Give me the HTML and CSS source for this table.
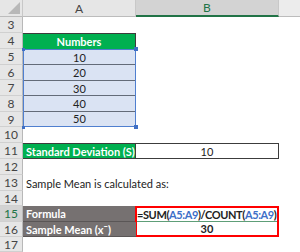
FILE: index.html
```html
<!DOCTYPE html>
<html>
<head>
<meta charset="utf-8">
<link rel="stylesheet" href="styles.css">
</head>
<body>
<div class="sheet">
  <div class="corner"><span class="tri"></span></div>
  <div class="ch">A</div>
  <div class="ch ch-sel">B</div>
  <div class="ch ch-rest"></div>

  <div class="rh">3</div><div class="c"></div><div class="c"></div><div class="c"></div>

  <div class="rh">4</div><div class="c green center bold bd-hdr">Numbers</div><div class="c"></div><div class="c"></div>

  <div class="rh">5</div>
  <div class="blk">
    <div class="bc">10</div>
    <div class="bc">20</div>
    <div class="bc">30</div>
    <div class="bc">40</div>
    <div class="bc last">50</div>
    <span class="h h-tl"></span><span class="h h-tr"></span><span class="h h-bl"></span><span class="h h-br"></span>
  </div>
  <div class="c"></div><div class="c"></div>
  <div class="rh">6</div><div class="c"></div><div class="c"></div>
  <div class="rh">7</div><div class="c"></div><div class="c"></div>
  <div class="rh">8</div><div class="c"></div><div class="c"></div>
  <div class="rh">9</div><div class="c"></div><div class="c"></div>

  <div class="rh">10</div><div class="c"></div><div class="c"></div><div class="c"></div>

  <div class="rh">11</div><div class="c green bold pad bd-green">Standard Deviation (S)</div><div class="c center bd-val">10</div><div class="c"></div>

  <div class="rh">12</div><div class="c"></div><div class="c"></div><div class="c"></div>

  <div class="rh">13</div><div class="c pad over">Sample Mean is calculated as:</div><div class="c"></div><div class="c"></div>

  <div class="rh">14</div><div class="c"></div><div class="c"></div><div class="c"></div>

  <div class="rh rh-sel">15</div><div class="c dark bold pad">Formula</div>
  <div class="redbox">
    <div class="rb formula">=SUM(<span class="ref">A5:A9</span>)/COUNT(<span class="ref">A5:A9</span>)<span class="caret"></span></div>
    <div class="rb center bold">30</div>
  </div>
  <div class="c"></div>
  <div class="rh">16</div><div class="c dark bold pad">Sample Mean (x&#175;)</div><div class="c"></div>

  <div class="rh">17</div><div class="c"></div><div class="c"></div><div class="c"></div>
</div>
</body>
</html>
```
FILE: styles.css
```css
html, body {
  margin: 0;
  padding: 0;
  background: #ffffff;
}
body {
  font-family: Lato, "Liberation Sans", sans-serif;
  font-size: 11px;
  color: #222;
  width: 300px;
  height: 252px;
  overflow: hidden;
}
.sheet {
  display: grid;
  grid-template-columns: 23px 113px 143px 21px;
  grid-template-rows: 17px 16px 16px 16px 15px 16px 16px 15px 16px 16px 16px 16px 15px 16px 15px 15px;
}
.corner {
  background: #e6e6e6;
  border-right: 1px solid #c8c8c8;
  border-bottom: 1px solid #bcbcbc;
  position: relative;
}
.tri {
  position: absolute;
  right: 2px;
  bottom: 2px;
  width: 0;
  height: 0;
  border-left: 12px solid transparent;
  border-bottom: 12px solid #b8b8b8;
}
.ch {
  background: #e6e6e6;
  border-right: 1px solid #c8c8c8;
  border-bottom: 1px solid #bcbcbc;
  display: flex;
  align-items: center;
  justify-content: center;
  color: #444;
  font-size: 12px;
}
.ch-sel {
  background: #d3d3d3;
  color: #217346;
  border-bottom: 2px solid #217346;
}
.ch-rest {
  border-right: none;
  background: #ececec;
}
.rh {
  background: #e6e6e6;
  border-right: 1px solid #b8b8b8;
  border-bottom: 1px solid #d0d0d0;
  display: flex;
  align-items: center;
  justify-content: center;
  color: #444;
  font-size: 12px;
}
.rh-sel {
  background: #d3d3d3;
  color: #217346;
}
.c {
  display: flex;
  align-items: center;
  white-space: nowrap;
  min-width: 0;
}
.center { justify-content: center; }
.bold { font-weight: 700; }
.pad { padding-left: 3px; }
.over { overflow: visible; }
.green {
  background: #00b050;
  color: #ffffff;
}
.bd-hdr {
  border-top: 1px solid #3c3c3c;
  border-right: 1px solid #3c3c3c;
}
.bd-green {
  border-top: 1px solid #3c3c3c;
  border-bottom: 1px solid #3c3c3c;
  border-right: 1px solid #3c3c3c;
}
.bd-val {
  border-top: 1px solid #3c3c3c;
  border-bottom: 1px solid #3c3c3c;
  border-right: 1px solid #3c3c3c;
}
.blk {
  grid-row: span 5;
  background: #dae3f3;
  border: 1px solid #4f7fcf;
  display: flex;
  flex-direction: column;
  position: relative;
}
.bc {
  flex: 1;
  display: flex;
  align-items: center;
  justify-content: center;
  border-bottom: 1px solid #636b78;
}
.bc.last { border-bottom: none; }
.h {
  position: absolute;
  width: 4px;
  height: 4px;
  background: #3f6fc4;
}
.h-tl { left: -2px; top: -2px; width: 3px; height: 3px; }
.h-tr { right: -3px; top: -3px; }
.h-bl { left: -2px; bottom: -3px; width: 3px; height: 3px; }
.h-br { right: -3px; bottom: -3px; }
.dark {
  background: #767171;
  color: #ffffff;
  border-bottom: 1px solid #5a5656;
}
.redbox {
  grid-row: span 2;
  border: 2px solid #ff0000;
  display: flex;
  flex-direction: column;
  margin-left: -1px;
}
.rb {
  flex: 1;
  display: flex;
  align-items: center;
  white-space: nowrap;
}
.formula {
  font-weight: 700;
  border-bottom: 1px solid #5e9e78;
  position: relative;
  letter-spacing: -0.4px;
}
.ref { color: #3d6fc8; }
.caret {
  display: inline-block;
  width: 1px;
  height: 12px;
  background: #222;
  margin-left: 1px;
}
```
